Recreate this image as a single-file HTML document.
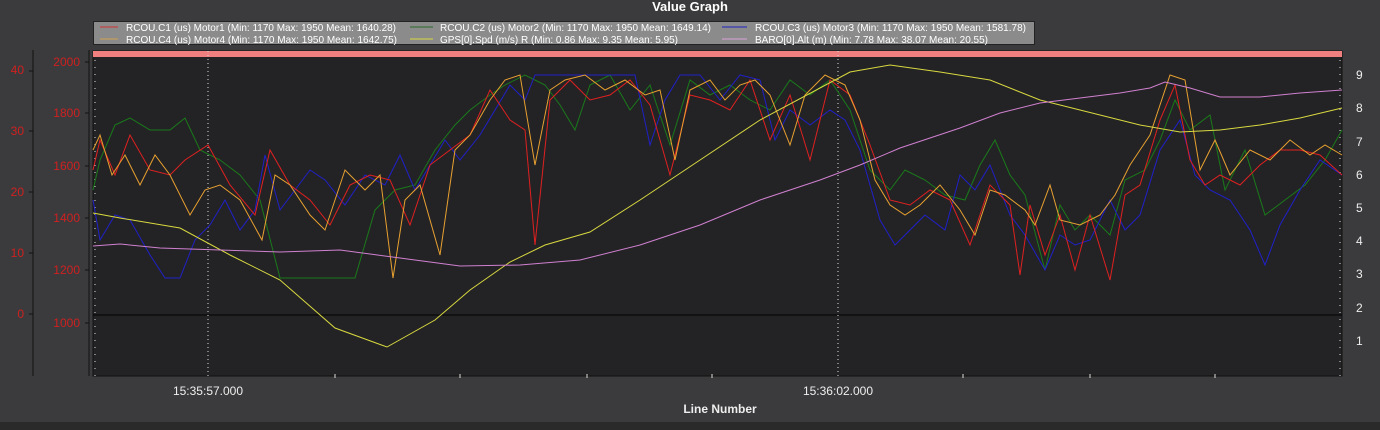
<html><head><style>
body{margin:0;width:1380px;height:430px;background:#3b3b3d;overflow:hidden;font-family:"Liberation Sans",sans-serif}
</style></head><body>
<svg width="1380" height="430" xmlns="http://www.w3.org/2000/svg" style="position:absolute;left:0;top:0">
<rect x="0" y="0" width="1380" height="430" fill="#3b3b3d"/>
<rect x="0" y="422" width="1380" height="8" fill="#2a2a2b"/>
<text x="690" y="11" fill="#fff" font-size="13" font-weight="bold" text-anchor="middle" font-family="Liberation Sans">Value Graph</text>
<rect x="93" y="51" width="1249" height="325" fill="#232325" stroke="#111" stroke-width="1"/>
<rect x="93" y="51" width="1249" height="6" fill="#f08080"/>
<line x1="93" y1="315" x2="1342" y2="315" stroke="#000" stroke-width="1"/>
<line x1="208" y1="51" x2="208" y2="376" stroke="#ddd" stroke-dasharray="1,3"/>
<line x1="838" y1="51" x2="838" y2="376" stroke="#ddd" stroke-dasharray="1,3"/>
<line x1="33" y1="50" x2="33" y2="376" stroke="#111"/>
<g fill="#d02020" font-size="12" text-anchor="end" font-family="Liberation Sans">
<text x="24" y="74">40</text><text x="24" y="135">30</text><text x="24" y="196">20</text><text x="24" y="257">10</text><text x="24" y="318">0</text>
<text x="80" y="66">2000</text><text x="80" y="117">1800</text><text x="80" y="170">1600</text><text x="80" y="222">1400</text><text x="80" y="274">1200</text><text x="80" y="327">1000</text>
</g>
<g stroke="#111"><line x1="29" y1="71" x2="33" y2="71"/><line x1="29" y1="131" x2="33" y2="131"/><line x1="29" y1="192" x2="33" y2="192"/><line x1="29" y1="253" x2="33" y2="253"/><line x1="29" y1="314" x2="33" y2="314"/>
<line x1="89" y1="50" x2="89" y2="376"/><line x1="85" y1="62" x2="89" y2="62"/><line x1="85" y1="113" x2="89" y2="113"/><line x1="85" y1="166" x2="89" y2="166"/><line x1="85" y1="218" x2="89" y2="218"/><line x1="85" y1="270" x2="89" y2="270"/><line x1="85" y1="323" x2="89" y2="323"/></g>
<line x1="95" y1="60" x2="95" y2="376" stroke="#ddd" stroke-dasharray="1,6"/>
<line x1="1340" y1="60" x2="1340" y2="376" stroke="#ddd" stroke-dasharray="1,6"/>
<g fill="#eee" font-size="12" font-family="Liberation Sans">
<text x="1356" y="79">9</text><text x="1356" y="112">8</text><text x="1356" y="146">7</text><text x="1356" y="179">6</text><text x="1356" y="212">5</text><text x="1356" y="245">4</text><text x="1356" y="278">3</text><text x="1356" y="312">2</text><text x="1356" y="345">1</text>
<text x="208" y="395" text-anchor="middle">15:35:57.000</text>
<text x="838" y="395" text-anchor="middle">15:36:02.000</text>
<text x="720" y="413" text-anchor="middle" font-weight="bold">Line Number</text>
</g>
<g stroke="#ddd"><line x1="335" y1="374" x2="335" y2="378"/><line x1="460" y1="374" x2="460" y2="378"/><line x1="587" y1="374" x2="587" y2="378"/><line x1="712" y1="374" x2="712" y2="378"/><line x1="963" y1="374" x2="963" y2="378"/><line x1="1090" y1="374" x2="1090" y2="378"/><line x1="1215" y1="374" x2="1215" y2="378"/></g>
<g fill="none" stroke-width="1">
<polyline stroke="#1a7a1a" points="93,190 100,160 115,125 130,118 150,130 170,130 185,118 200,150 220,160 240,175 260,200 280,278 300,278 330,278 355,278 375,210 395,190 415,185 435,150 455,125 470,110 490,95 505,85 525,75 545,85 560,105 575,130 590,85 610,75 630,110 650,85 670,145 690,80 710,95 730,85 750,100 770,110 790,80 810,95 830,80 850,110 870,170 890,190 905,170 925,180 945,195 965,200 980,165 995,140 1010,175 1025,195 1045,270 1060,205 1075,230 1090,215 1110,235 1125,180 1145,170 1160,140 1175,100 1190,130 1210,115 1225,190 1245,150 1265,215 1285,200 1305,185 1325,160 1342,130"/>
<polyline stroke="#2020c8" points="93,200 100,240 115,215 130,220 150,255 165,278 180,278 195,240 210,225 225,200 240,230 255,210 265,155 280,210 295,190 310,170 325,180 345,205 365,175 385,185 400,155 415,190 430,165 445,140 460,160 480,135 495,110 510,85 525,100 535,75 555,75 575,75 595,75 615,75 635,75 650,145 665,100 680,75 700,75 720,100 740,75 760,80 775,140 790,110 810,125 830,110 845,120 860,150 880,220 895,245 910,230 925,215 945,230 960,175 975,190 990,165 1010,215 1025,235 1045,270 1060,235 1075,245 1090,240 1110,200 1125,230 1140,215 1160,150 1180,120 1195,175 1210,190 1230,200 1250,230 1265,265 1280,225 1300,190 1320,160 1342,175"/>
<polyline stroke="#e02020" points="93,170 100,140 115,175 130,135 150,170 170,175 185,160 208,145 230,185 255,215 270,150 290,185 310,200 330,225 350,185 370,175 390,180 410,225 430,165 450,150 470,135 490,90 510,120 525,130 535,245 550,100 570,80 590,100 610,95 630,80 650,105 670,175 690,95 710,100 730,110 750,80 770,140 790,95 810,160 830,80 850,95 870,145 890,200 910,205 930,190 950,200 970,245 990,185 1010,205 1020,275 1030,205 1045,255 1060,215 1075,270 1090,215 1110,280 1125,195 1140,185 1160,120 1175,85 1190,160 1205,185 1220,175 1240,185 1260,165 1280,150 1300,150 1320,155 1342,175"/>
<polyline stroke="#e8a030" points="93,150 100,135 112,175 125,155 140,185 155,155 170,175 190,215 205,190 220,185 240,200 262,240 275,175 290,185 310,215 325,230 345,170 365,190 380,175 393,278 405,200 420,185 440,255 455,150 470,135 490,100 505,80 520,75 535,165 550,90 565,80 585,75 605,90 625,80 645,95 660,90 675,160 690,90 710,80 725,100 740,85 755,80 770,95 790,145 805,95 825,75 845,85 860,120 875,180 890,205 905,215 920,205 940,185 960,210 975,235 990,190 1005,195 1025,210 1035,225 1050,185 1060,220 1080,225 1100,215 1115,195 1130,165 1150,135 1170,75 1185,80 1200,170 1215,140 1230,175 1250,150 1270,160 1290,140 1310,155 1325,145 1342,155"/>
<polyline stroke="#d8d840" points="93,213 120,218 180,228 230,255 280,280 335,328 387,347 435,320 470,290 510,262 545,245 590,232 640,200 700,160 760,120 820,88 850,72 890,65 940,72 990,80 1040,100 1080,110 1140,125 1180,132 1220,130 1260,125 1300,118 1342,108"/>
<polyline stroke="#d080d0" points="93,246 120,244 160,248 220,250 280,252 340,250 400,258 460,266 520,265 580,260 640,245 700,225 760,200 820,180 860,165 900,148 960,128 1000,113 1040,103 1080,98 1120,93 1150,88 1165,82 1190,88 1220,97 1260,97 1300,93 1342,90"/>
</g>
<rect x="93.5" y="21.5" width="941" height="23" fill="#8b8b8b" stroke="#222"/>
<g stroke-width="1"><line x1="100" y1="27" x2="118" y2="27" stroke="#d03030"/><line x1="100" y1="39" x2="118" y2="39" stroke="#d0a050"/>
<line x1="410" y1="27" x2="433" y2="27" stroke="#2a6a2a"/><line x1="410" y1="39" x2="433" y2="39" stroke="#d8d840"/>
<line x1="722" y1="27" x2="747" y2="27" stroke="#2020c0"/><line x1="722" y1="39" x2="747" y2="39" stroke="#d8a0d8"/></g>
<g fill="#fff" font-size="10.5" font-family="Liberation Sans" lengthAdjust="spacingAndGlyphs">
<text x="126" y="31" textLength="270" lengthAdjust="spacingAndGlyphs">RCOU.C1 (us) Motor1 (Min: 1170 Max: 1950 Mean: 1640.28)</text>
<text x="126" y="43" textLength="271" lengthAdjust="spacingAndGlyphs">RCOU.C4 (us) Motor4 (Min: 1170 Max: 1950 Mean: 1642.75)</text>
<text x="440" y="31" textLength="271" lengthAdjust="spacingAndGlyphs">RCOU.C2 (us) Motor2 (Min: 1170 Max: 1950 Mean: 1649.14)</text>
<text x="440" y="43" textLength="238" lengthAdjust="spacingAndGlyphs">GPS[0].Spd (m/s)  R (Min: 0.86 Max: 9.35 Mean: 5.95)</text>
<text x="755" y="31" textLength="271" lengthAdjust="spacingAndGlyphs">RCOU.C3 (us) Motor3 (Min: 1170 Max: 1950 Mean: 1581.78)</text>
<text x="755" y="43" textLength="233" lengthAdjust="spacingAndGlyphs">BARO[0].Alt (m)  (Min: 7.78 Max: 38.07 Mean: 20.55)</text>
</g>
</svg>
</body></html>
